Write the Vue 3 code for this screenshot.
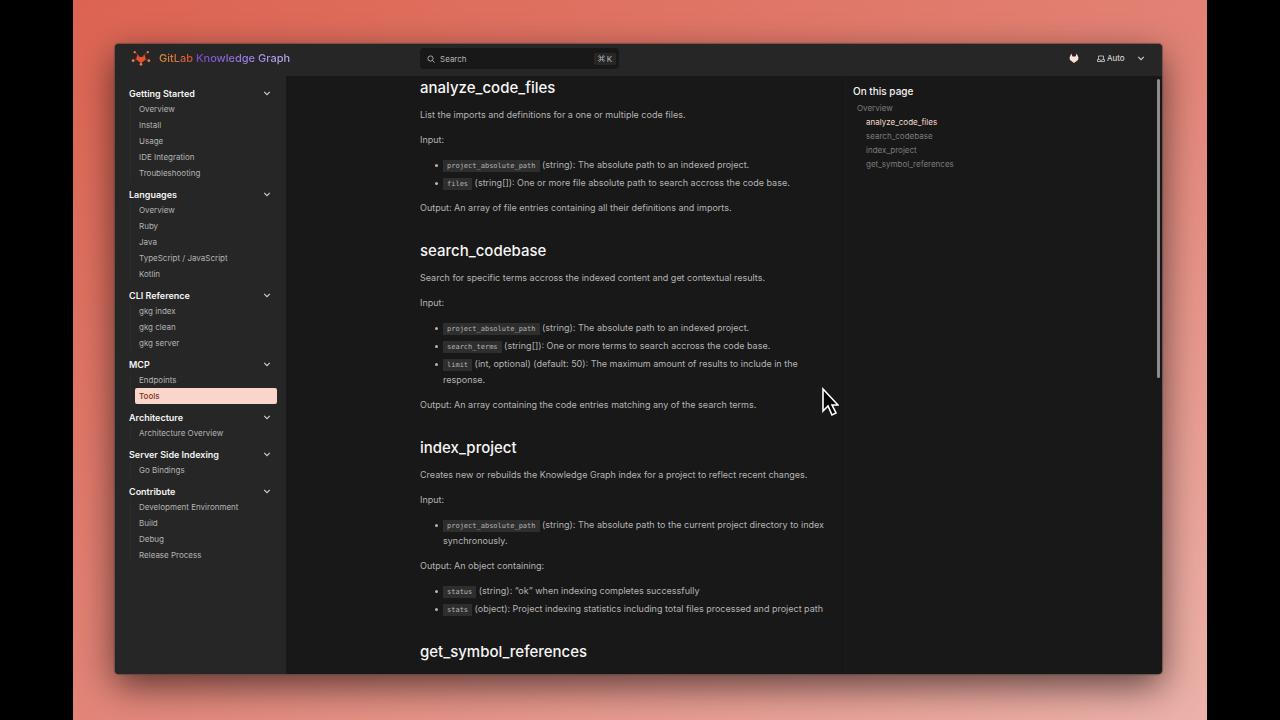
<script setup>
const groups = [
  { title: 'Getting Started', items: ['Overview', 'Install', 'Usage', 'IDE Integration', 'Troubleshooting'] },
  { title: 'Languages', items: ['Overview', 'Ruby', 'Java', 'TypeScript / JavaScript', 'Kotlin'] },
  { title: 'CLI Reference', items: ['gkg index', 'gkg clean', 'gkg server'] },
  { title: 'MCP', items: ['Endpoints', 'Tools'] },
  { title: 'Architecture', items: ['Architecture Overview'] },
  { title: 'Server Side Indexing', items: ['Go Bindings'] },
  { title: 'Contribute', items: ['Development Environment', 'Build', 'Debug', 'Release Process'] },
]

const path = { code: 'project_absolute_path', text: '(string): The absolute path to an indexed project.' }

const tools = [
  {
    name: 'analyze_code_files',
    blocks: [
      { p: 'List the imports and definitions for a one or multiple code files.' },
      { p: 'Input:' },
      { list: [path, { code: 'files', text: '(string[]): One or more file absolute path to search accross the code base.' }] },
      { p: 'Output: An array of file entries containing all their definitions and imports.' },
    ],
  },
  {
    name: 'search_codebase',
    blocks: [
      { p: 'Search for specific terms accross the indexed content and get contextual results.' },
      { p: 'Input:' },
      {
        list: [
          path,
          { code: 'search_terms', text: '(string[]): One or more terms to search accross the code base.' },
          { code: 'limit', text: '(int, optional) (default: 50): The maximum amount of results to include in the response.' },
        ],
      },
      { p: 'Output: An array containing the code entries matching any of the search terms.' },
    ],
  },
  {
    name: 'index_project',
    blocks: [
      { p: 'Creates new or rebuilds the Knowledge Graph index for a project to reflect recent changes.' },
      { p: 'Input:' },
      { list: [{ code: 'project_absolute_path', text: '(string): The absolute path to the current project directory to index synchronously.' }] },
      { p: 'Output: An object containing:' },
      {
        list: [
          { code: 'status', text: '(string): “ok” when indexing completes successfully' },
          { code: 'stats', text: '(object): Project indexing statistics including total files processed and project path' },
        ],
      },
    ],
  },
  { name: 'get_symbol_references', blocks: [] },
]
</script>

<template>
  <div class="stage">
    <div class="window">
      <header class="topbar">
        <a class="brand" href="#">
          <svg class="logo" viewBox="0 0 38 30" aria-hidden="true">
            <g stroke="#a83c28" stroke-width="1.6">
              <path d="M19 15 7 4M19 15 32 4M19 15 4 20M19 15 34 20M19 15V27" />
            </g>
            <path fill="#e8512f" d="M13 8l2 5h8l2-5 3 7-1 4-8 6-8-6-1-4z" />
            <g fill="#e08058">
              <circle cx="7" cy="4" r="2.2" /><circle cx="32" cy="4" r="2.2" />
              <circle cx="4" cy="20" r="2.600" /><circle cx="34" cy="20" r="2.600" />
              <circle cx="19" cy="27" r="2.600" />
            </g>
          </svg>
          <span class="name"><span class="name-a">GitLab</span> <span class="name-b">Knowledge Graph</span></span>
        </a>
        <button class="search" type="button">
          <svg class="lens" viewBox="0 0 16 16" aria-hidden="true">
            <circle cx="7" cy="7" r="5.2" /><path d="M11 11l4 4" />
          </svg>
          <span>Search</span>
          <kbd><svg class="cmd" viewBox="0 0 16 16" aria-hidden="true"><path d="M5.500 5.500h5v5h-5zM5.500 5.500v-2a2 2 0 1 0-2 2zM10.500 5.500h2a2 2 0 1 0-2-2zM10.500 10.500v2a2 2 0 1 0 2-2zM5.500 10.500h-2a2 2 0 1 0 2 2z" /></svg>K</kbd>
        </button>
        <div class="tools">
          <a class="fox" href="#" aria-label="GitLab">
            <svg viewBox="0 0 20 20" aria-hidden="true"><path fill="#fbe0d6" d="M4.500 1l2.500 6h6l2.500-6 3.500 8.500-1 4.500-8 6-8-6-1-4.500z" /></svg>
          </a>
          <label class="theme">
            <svg class="laptop" viewBox="0 0 16 14" aria-hidden="true"><path d="M3 9V2h10v7M1 9h4l1 1.500h4L11 9h4v4H1z" /></svg>
            <select aria-label="Select theme">
              <option>Auto</option>
              <option>Dark</option>
              <option>Light</option>
            </select>
            <svg class="chev" viewBox="0 0 10 10" aria-hidden="true"><path d="M1.500 3.500 5 7l3.500-3.500" /></svg>
          </label>
        </div>
      </header>

      <div class="body">
        <nav class="sidebar" aria-label="Main">
          <section v-for="g in groups" :key="g.title" class="group">
            <button class="group-title" type="button" aria-expanded="true">
              <span>{{ g.title }}</span>
              <svg class="chev" viewBox="0 0 10 10" aria-hidden="true"><path d="M1.500 3.500 5 7l3.500-3.500" /></svg>
            </button>
            <ul>
              <li v-for="item in g.items" :key="item">
                <a href="#" :class="{ current: item === 'Tools' }">{{ item }}</a>
              </li>
            </ul>
          </section>
        </nav>

        <main class="content">
          <section v-for="t in tools" :key="t.name" class="tool">
            <h2>{{ t.name }}</h2>
            <template v-for="(b, i) in t.blocks" :key="i">
              <p v-if="b.p">{{ b.p }}</p>
              <ul v-else>
                <li v-for="l in b.list" :key="l.code"><code>{{ l.code }}</code> {{ l.text }}</li>
              </ul>
            </template>
          </section>
        </main>

        <aside class="toc">
          <h2>On this page</h2>
          <a href="#">Overview</a>
          <a v-for="(t, i) in tools" :key="t.name" href="#" class="sub" :class="{ active: i === 0 }">{{ t.name }}</a>
        </aside>
        <div class="thumb"></div>
      </div>
    </div>
    <svg class="pointer" viewBox="0 0 18 30" aria-hidden="true">
      <path d="M2 2v22l5-5 4 9 4-2-4-8h6z" fill="#000" stroke="#fff" stroke-width="1.600" />
    </svg>
  </div>
</template>

<style>
body {
  margin: 0;
  background: #000;
}
</style>

<style scoped>
* {
  box-sizing: border-box;
}
.stage {
  position: relative;
  display: flex;
  height: 100vh;
  margin: 0 73px;
  padding: 44px 45px 46px 42px;
  overflow: hidden;
  background: linear-gradient(150deg, #dc6351 0%, #e28376 50%, #ecb2aa 100%);
  font-family: Inter, "Liberation Sans", sans-serif;
  color: #b4b4b4;
}
.window {
  flex: 1;
  display: flex;
  flex-direction: column;
  min-width: 0;
  border-radius: 4px;
  overflow: hidden;
  background: #181818;
  box-shadow: 0 0 1px 1px rgba(90, 70, 68, 0.7), 0 12px 36px rgba(0, 0, 0, 0.6);
}
a {
  color: inherit;
  text-decoration: none;
}
button,
select {
  font: inherit;
  color: inherit;
  border: 0;
  padding: 0;
  background: none;
}
ul {
  list-style: none;
  margin: 0;
  padding: 0;
}
svg {
  flex: none;
}
.topbar {
  flex: none;
  display: flex;
  align-items: center;
  height: 32px;
  padding: 0 16px;
  background: #262626;
}
.brand {
  display: flex;
  align-items: center;
  gap: 8px;
  width: 289px;
  height: 28px;
  align-self: flex-start;
}
.logo {
  width: 20px;
  height: 16px;
}
.name {
  font-size: 11px;
  line-height: 16px;
  font-weight: 500;
  white-space: nowrap;
}
.name-a,
.name-b {
  background-clip: text;
  color: transparent;
}
.name-a {
  background-image: linear-gradient(90deg, #d9913c, #dc5236);
}
.name-b {
  background-image: linear-gradient(90deg, #7747cf, #9f7fe8 55%, #c0b0ee);
}
.search {
  display: flex;
  align-items: center;
  align-self: flex-start;
  gap: 5px;
  width: 199px;
  height: 21px;
  margin-top: 4px;
  padding: 0 3px 0 7px;
  border-radius: 4px;
  background: #181818;
  font-size: 8px;
  color: #b4b4b4;
}
.lens {
  width: 8px;
  height: 8px;
  fill: none;
  stroke: #b4b4b4;
  stroke-width: 1.8;
}
.search kbd {
  display: flex;
  align-items: center;
  gap: 2px;
  height: 12px;
  margin-left: auto;
  padding: 0 4px;
  border-radius: 2px;
  background: #272727;
  font-family: inherit;
  font-size: 8px;
}
.cmd {
  width: 7px;
  height: 7px;
  fill: none;
  stroke: #b4b4b4;
  stroke-width: 1.6;
}
.tools {
  display: flex;
  align-items: center;
  align-self: flex-start;
  gap: 18px;
  height: 28px;
  margin-left: auto;
  color: #e2e2e2;
}
.fox {
  display: flex;
}
.fox svg {
  width: 10px;
  height: 10px;
}
.theme {
  display: flex;
  align-items: center;
  gap: 2px;
  padding-right: 1px;
  font-size: 8px;
}
.laptop {
  width: 8px;
  height: 7px;
  fill: none;
  stroke: #d0d0d0;
  stroke-width: 1.6;
}
.theme select {
  width: 28px;
  appearance: none;
}
.chev {
  width: 8px;
  height: 8px;
  fill: none;
  stroke: #d0d0d0;
  stroke-width: 1.4;
}
.body {
  position: relative;
  flex: 1;
  display: flex;
  min-height: 0;
}
.sidebar {
  flex: none;
  width: 171px;
  padding: 9px 9px 0 14px;
  background: #262626;
}
.group {
  margin-bottom: 5px;
}
.group-title {
  display: flex;
  align-items: center;
  justify-content: space-between;
  width: 100%;
  height: 16px;
  padding-right: 6px;
  font-size: 9px;
  font-weight: 600;
  color: #f4f4f4;
}
.group ul {
  margin-left: 1px;
  border-left: 1px solid #2c2c2c;
  padding-left: 4px;
}
.group li a {
  display: block;
  padding: 0 4px;
  border-radius: 2px;
  font-size: 8px;
  line-height: 16px;
}
.group li .current {
  background: #f9d6c9;
  color: #80301f;
  font-weight: 500;
}
.content {
  flex: 1;
  min-width: 0;
  padding: 2px 16px 0 134px;
  overflow: hidden;
  font-size: 9px;
  line-height: 16px;
}
.tool {
  margin-bottom: 25px;
}
.tool h2 {
  margin: 0;
  font-size: 15px;
  line-height: 20px;
  font-weight: 500;
  color: #f6f6f6;
}
.tool p,
.tool ul {
  margin: 9px 0 0;
}
.tool ul {
  display: grid;
  gap: 2px;
  padding-left: 23px;
}
.tool li {
  position: relative;
}
.tool li::before {
  content: "";
  position: absolute;
  left: -8px;
  top: 7px;
  width: 3px;
  height: 3px;
  border-radius: 50%;
  background: #b4b4b4;
}
.tool code {
  padding: 2px 4px;
  background: #2e2e2e;
  font-family: "DejaVu Sans Mono", monospace;
  font-size: 7px;
  line-height: 8px;
}
.toc {
  flex: none;
  width: 317px;
  padding: 7px;
  border-left: 1px solid #1c1c1c;
  display: flex;
  flex-direction: column;
  font-size: 8px;
  line-height: 14px;
  color: #7c7c7c;
}
.toc h2 {
  margin: 0 0 2px;
  font-size: 10px;
  line-height: 16px;
  font-weight: 500;
  color: #f4f4f4;
}
.toc a {
  padding-left: 4px;
}
.toc .sub {
  padding-left: 13px;
}
.toc .active {
  color: #f7dccf;
}
.thumb {
  position: absolute;
  top: 3px;
  right: 2px;
  width: 3px;
  height: 50%;
  border-radius: 2px;
  background: #8c8c8c;
}
.pointer {
  position: absolute;
  left: 748px;
  top: 387px;
  width: 18px;
  height: 30px;
}
</style>
